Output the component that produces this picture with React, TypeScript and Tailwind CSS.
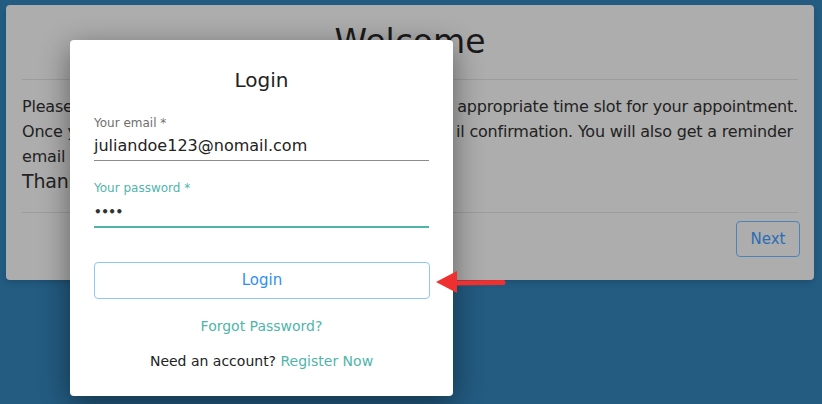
const font = { fontFamily: '"DejaVu Sans", "Noto Sans", sans-serif' };

export default function App() {
  return (
    <div
      className="relative w-[822px] h-[404px] overflow-hidden bg-[#235b81] text-[#1c1c1c]"
      style={font}
    >
      <div className="pt-[5px] pl-[6px] pr-[8px]">
        <div className="h-[275px] rounded-[4px] bg-[#adadad] shadow-md flex flex-col">
          <h1 className="h-[74px] flex items-center justify-center text-[33px] text-[#1a1a1a]">
            Welcome
          </h1>
          <div className="mx-[16px] border-t border-[#9c9c9c]" />
          <div className="px-[16px] pt-[14px] h-[132px] text-[16px] leading-[25px] text-[#222] tracking-[-0.2px] whitespace-nowrap">
            <p className="flex justify-between">
              <span className="min-w-0 overflow-hidden">Please select a service and a date, then choose an</span>
              <span className="shrink-0">appropriate time slot for your appointment.</span>
            </p>
            <p className="flex justify-between pr-[5px]">
              <span className="min-w-0 overflow-hidden">Once you have booked you will receive an ema</span>
              <span className="shrink-0">il confirmation. You will also get a reminder</span>
            </p>
            <p>email a day before your appointment.</p>
            <p className="text-[19px] leading-[25px]">Thank you!</p>
          </div>
          <div className="mx-[16px] border-t border-[#9c9c9c]" />
          <div className="flex justify-end px-[14px] pt-[8px]">
            <button className="h-[36px] w-[64px] rounded-[4px] border border-[#4f82b8] text-[#2b6cb4] text-[15px]">
              Next
            </button>
          </div>
        </div>
      </div>

      {/* Login dialog */}
      <div className="absolute left-[70px] top-[40px] w-[383px] h-[356px] bg-white rounded-[4px] shadow-[0_8px_30px_rgba(0,0,0,0.45)] px-[24px] flex flex-col">
        <h2 className="text-center text-[20px] text-[#222] pt-[26px] leading-[28px]">Login</h2>
        <div className="mt-[21px]">
          <label className="block text-[12px] text-[#6f6f6f] leading-[16px]">Your email *</label>
          <div className="text-[16px] text-[#222] leading-[24px] pt-[3px] pb-[2px] border-b border-[#8c8c8c]">
            juliandoe123@nomail.com
          </div>
        </div>
        <div className="mt-[19px]">
          <label className="block text-[12px] text-[#4fb5aa] leading-[16px]">Your password *</label>
          <div className="text-[12px] font-bold text-[#333] leading-[24px] pt-[4px] pb-[2px] border-b-2 border-[#4fb5aa] tracking-[-0.5px]">
            ••••
          </div>
        </div>
        <button className="mt-[34px] h-[37px] w-[336px] rounded-[4px] border border-[#90c6fa] text-[#2f8ff0] text-[15px]">
          Login
        </button>
        <a className="mt-[17px] text-center text-[14px] text-[#4fb5aa]">Forgot Password?</a>
        <p className="mt-[14px] text-center text-[14px] text-[#222]">
          Need an account? <a className="text-[#4fb5aa]">Register Now</a>
        </p>
      </div>

      {/* Red arrow annotation */}
      <svg className="absolute left-[430px] top-[266px]" width="80" height="32" viewBox="0 0 80 32">
        <path d="M24 17 L73 16.5" stroke="#ef3030" strokeWidth="5" strokeLinecap="round" />
        <path d="M6 16 L27 5 L27 27 Z" fill="#ef3030" />
      </svg>
    </div>
  );
}
